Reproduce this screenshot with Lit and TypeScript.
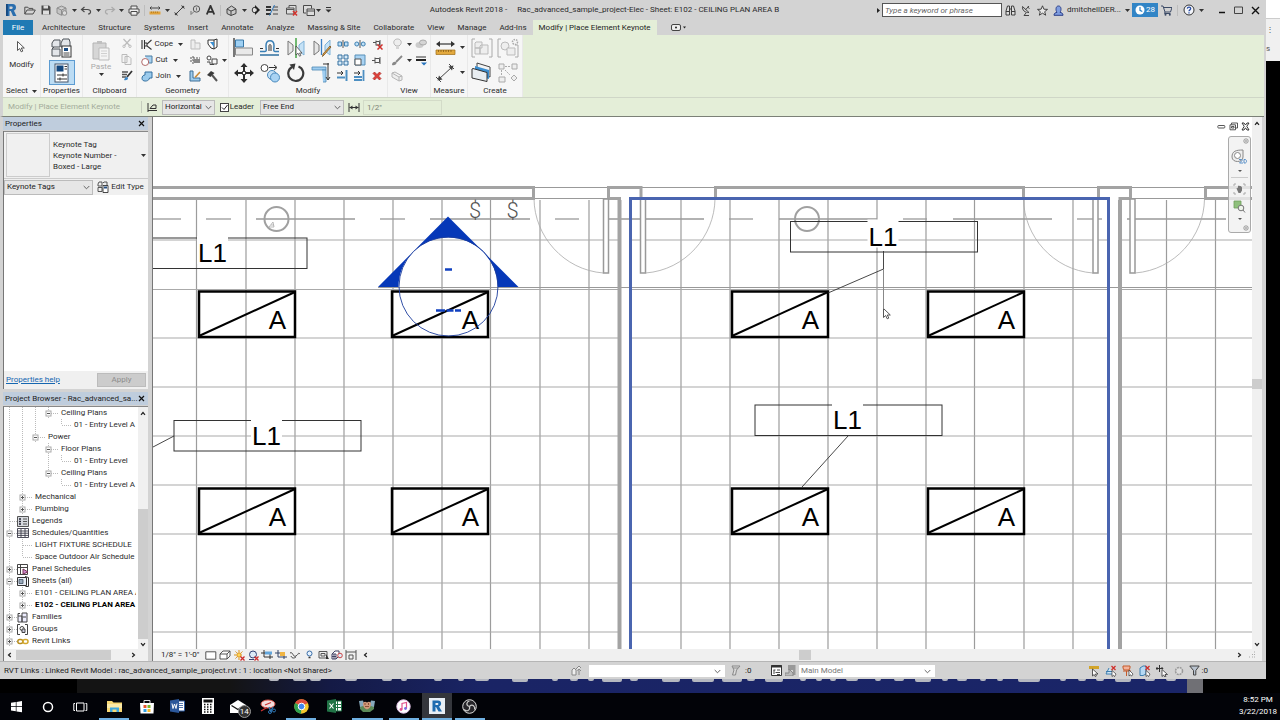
import { LitElement, html, svg, css } from "lit";
import { customElement } from "lit/decorators.js";
import { classMap } from "lit/directives/class-map.js";

type Glyph = [number, number, unknown];

const caret = svg`<path d="M0 0h5L2.500 3z" fill="#333"/>`;
const arrowCursor = svg`<path d="M.5.5v9l2.200-2 1.500 3.300 1.600-.7L4.300 7h3z" fill="#fff" stroke="#444" stroke-width=".9"/>`;

const G: Record<string, Glyph> = {
  caret: [5, 3, caret],
  chev: [7, 5, svg`<path d="M.7 1l2.800 2.800L6.300 1" fill="none" stroke="#555" stroke-width=".9"/>`],
  x: [7, 7, svg`<path d="M1 1l5 5M6 1L1 6" stroke="#111" stroke-width="1.200"/>`],
  up: [6, 5, svg`<path d="M1 3.800L3 1.500l2 2.300" fill="none" stroke="#222" stroke-width="1.200"/>`],
  down: [6, 5, svg`<path d="M1 1.200L3 3.500l2-2.300" fill="none" stroke="#222" stroke-width="1.200"/>`],
  left: [5, 6, svg`<path d="M3.800 1L1.500 3l2.300 2" fill="none" stroke="#222" stroke-width="1.200"/>`],
  right: [5, 6, svg`<path d="M1.200 1l2.300 2-2.300 2" fill="none" stroke="#222" stroke-width="1.200"/>`],
  revit: [12, 14, svg`<path d="M1 1h6.500c2.500 0 3.500 1.500 3.500 3.400 0 1.600-.8 2.800-2.200 3.200L11.500 13H8L5.800 8H4.500v5H1zM4.500 3.500v2.400h2.200c1.400 0 1.400-2.400 0-2.400z" fill="#2a6eae"/><path d="M1 1h1.800v12H1z" fill="#17497f"/>`],
  open: [12, 9, svg`<path d="M.8 8V1.200h3l1 1.200h4V4M.8 8L3 4h8.300L9 8z" fill="none" stroke="#4d4d4d" stroke-width="1"/>`],
  save: [10, 10, svg`<path d="M.5.500h7.500L9.500 2v7.500h-9z" fill="#4a4a4a"/><path d="M2.500.500h4.500v3H2.500zM2 5.500h6v4H2z" fill="#ddd"/>`],
  sync: [12, 11, svg`<path d="M1 3l4.500-2L10 3v5l-4.500 2.300L1 8zM1 3l4.500 2L10 3M5.500 5v5" fill="#c4c4c4" stroke="#8e8e8e"/><circle cx="8.500" cy="8" r="2.300" fill="#ddd" stroke="#8e8e8e"/>`],
  undo: [12, 9, svg`<path d="M4.500 1L1.500 3.500l3 2.500M1.500 3.500h6c4 0 4 4.500.5 4.500" fill="none" stroke="#4a4a4a" stroke-width="1.200"/>`],
  redo: [12, 9, svg`<path d="M7.500 1l3 2.500-3 2.500M10.500 3.500h-6c-4 0-4 4.500-.5 4.500" fill="none" stroke="#aaa" stroke-width="1.200"/>`],
  print: [12, 11, svg`<path d="M3 4V1h6v3M3 8H1V4h10v4H9M3 6.500h6v3.700H3z" fill="#eee" stroke="#4a4a4a"/>`],
  measure: [12, 9, svg`<path d="M1 2h10M2.500.500L1 2l1.500 1.500M9.500.500L11 2 9.500 3.500" fill="none" stroke="#444"/><path d="M.5 5.500h11v3H.5z" fill="#e0a23a"/><path d="M2.500 5.500v1.500m2-1.500v1.500m2-1.500v1.500m2-1.500v1.500" stroke="#a86f12" stroke-width=".6"/>`],
  dim: [11, 11, svg`<path d="M2 9l7-7M.5 7.500l3 3M7.500.5l3 3" stroke="#444" fill="none"/><circle cx="2" cy="9" r="1.300" fill="#444"/><circle cx="9" cy="2" r="1.300" fill="#444"/>`],
  tag: [11, 10, svg`<circle cx="6.500" cy="4" r="3.200" fill="none" stroke="#555"/><path d="M4 6.500L1 9.500V6M6.500 2.500v3" stroke="#777" fill="none"/>`],
  textA: [9, 10, svg`<path d="M.8 9.500L4.500.8l3.700 8.700M2 6.800h5" stroke="#333" stroke-width="1.800" fill="none"/>`],
  home3d: [11, 11, svg`<path d="M1 4l4.500-3L10 4v4.500L5 10.500 1 8.500zM1 4l4 2 5-2M5 6v4.500" fill="#c9c9c9" stroke="#444"/>`],
  section: [9, 10, svg`<circle cx="4" cy="5" r="2.800" fill="#eee" stroke="#333"/><path d="M4 0l5 5-5 5z" fill="#222"/><circle cx="4" cy="5" r="1.800" fill="#ddd"/>`],
  thin: [12, 11, svg`<path d="M0 2h5M0 5h5M0 9h5" stroke="#333" stroke-width="1.800"/><path d="M7 2h5M7 5h5M7 9h5" stroke="#333" stroke-width=".9"/><path d="M8.500 0L3.500 10.500" stroke="#2f7ac0"/>`],
  closeHidden: [12, 11, svg`<path d="M3 3V.5h7V6M.5 3H8v6H.5zM.5 4.500H8" fill="#ddd" stroke="#555"/><path d="M7 6l4 4.500M11 6L7 10.500" stroke="#d3322c" stroke-width="1.500"/>`],
  switchWin: [12, 11, svg`<path d="M.5 3.500V.5h8v3M.5 3v5H3M4 4h7.500v6.500H4zM4 6h7.500" fill="#ddd" stroke="#4a4a4a"/>`],
  custom: [7, 6, svg`<path d="M1 .5h5" stroke="#333"/><path d="M.5 2.500h6L3.500 5.500z" fill="#333"/>`],
  playR: [3, 5, svg`<path d="M0 0l3 2.500L0 5z" fill="#222"/>`],
  binoc: [11, 11, svg`<path d="M1 10V6l1.500-5h2v9zM10 10V6L8.500 1h-2v9zM4.500 4h2M1 6.500h3.500M6.500 6.500H10" fill="#ddd" stroke="#3e3e3e"/>`],
  satellite: [10, 11, svg`<path d="M1.500 1.500C1 5 4 8 8 7.500zM4.500 4.800L8 1M5 8l-2 2.500h5M6.500 2l2 1.500" fill="none" stroke="#444"/>`],
  star: [11, 11, svg`<path d="M5.500.8l1.400 3.400 3.600.2-2.800 2.300 1 3.500-3.200-2-3.200 2 1-3.500L.5 4.400l3.600-.2z" fill="#e8e8e8" stroke="#333" stroke-width=".9"/>`],
  user: [11, 11, svg`<path d="M1 10.300c0-2 1.300-2.600 3-3C2.500 5.500 2.500 1 5.500 1s3 4.500 1.500 6.300c1.700.4 3 1 3 3z" fill="#7f9de0" stroke="#2c3f88"/>`],
  clock: [10, 10, svg`<circle cx="5" cy="5" r="4.500" fill="#fff"/><path d="M5 2v3.300l2.300 1.200" stroke="#2d83c5" fill="none" stroke-width="1.200"/>`],
  cart: [11, 11, svg`<path d="M0 1h2l2 6h5.500L11 2.500H2.800M4 7L3.500 8.500h6" fill="none" stroke="#3c4b66"/><circle cx="4.500" cy="9.800" r="1" fill="#3c4b66"/><circle cx="8.800" cy="9.800" r="1" fill="#3c4b66"/>`],
  help: [12, 12, svg`<circle cx="6" cy="6" r="5" fill="#f3f5fa" stroke="#333"/><path d="M4.300 4.600c.2-2 3.400-1.900 3.400 0C7.700 6 6 5.800 6 7.300M6 8.200v1.300" fill="none" stroke="#2a4fa5" stroke-width="1.300"/>`],
  min: [8, 8, svg`<path d="M1 6.500h6" stroke="#111" stroke-width="1.500"/>`],
  max: [9, 8, svg`<path d="M.5 1h8v6.500h-8z" fill="none" stroke="#444"/>`],
  close: [9, 9, svg`<path d="M1 1l7 7M8 1L1 8" stroke="#111" stroke-width="1.400"/>`],
  tabMore: [15, 7, svg`<rect x=".5" y=".5" width="9" height="6" rx="1.500" fill="#eee" stroke="#444"/><circle cx="5" cy="3.500" r="1" fill="#222"/><path d="M12 2.500h3L13.500 4.500z" fill="#222"/>`],
  cursor: [9, 13, arrowCursor],
  typeProps: [21, 20, svg`<path d="M1 5l2-3h6v7H1zM10 5l2-4h6l1 3v5h-9zM1 11h8v7H1zM1 11l2-2" fill="#e3e6ea" stroke="#4d5258"/><rect x="11" y="8" width="9" height="11" fill="#fff" stroke="#333"/><path d="M13 10h4v3h-4z" fill="#1b4d84"/><path d="M12.500 15h6M12.500 17h6" stroke="#333" stroke-width=".9"/>`],
  props: [16, 20, svg`<rect x="1" y="1" width="13" height="18" fill="#fff" stroke="#44546a"/><path d="M2.500 2.500h7v6h-7z" fill="#12477f"/><path d="M10.500 3.500h2.500M10.500 6h2.500M3 12h10M3 16h10M9 10.500v3M6 14.500v3" stroke="#333"/>`],
  paste: [18, 21, svg`<path d="M1 3h13v16H1z" fill="#d6d6d6" stroke="#b4b4b4"/><path d="M5 1h5v3H5z" fill="#c0c0c0"/><path d="M7 8h10v12H7z" fill="#f4f4f4" stroke="#bbb"/><path d="M9 11h6M9 13.500h6M9 16h6" stroke="#d0d0d0"/>`],
  cut: [10, 10, svg`<path d="M1.500 1l6 6.500M8.500 1l-6 6.500" stroke="#bbb" stroke-width="1.200"/><circle cx="2" cy="8.300" r="1.200" fill="none" stroke="#bbb"/><circle cx="8" cy="8.300" r="1.200" fill="none" stroke="#bbb"/>`],
  copyDim: [11, 11, svg`<path d="M1 .5h5v8H1zM4 2.500h4l2 2v6H4z" fill="#f4f4f4" stroke="#bbb"/>`],
  match: [12, 11, svg`<path d="M1 2h6M1 4.500h5M1 7h4" stroke="#555" stroke-width="1.300"/><path d="M11 1L6 7" stroke="#333" stroke-width="1.800"/><path d="M3 10c1-3 3-4 4-2 0 2-2 2.500-4 2z" fill="#3d86c6"/>`],
  cope: [11, 11, svg`<path d="M1 1v9M3.500 1v9M10.500 1L6 5v2l4.500 3.500M3.500 4H6M3.500 7H6" fill="none" stroke="#333" stroke-width="1.100"/>`],
  cutGeo: [12, 11, svg`<path d="M4 1h7v7H8" fill="#a9d2ef" stroke="#4a7ca3"/><circle cx="4.200" cy="7" r="3.500" fill="#fff" stroke="#b06a6a"/>`],
  join: [12, 11, svg`<path d="M4 1h7v6H8.500c-.5 4-7.500 4-7.500.5C1 5 2.500 4 4 4z" fill="#9bcbed" stroke="#336f9f"/>`],
  jSplit: [11, 11, svg`<path d="M1 1h4v3h5v6H1z" fill="#eee" stroke="#bbb"/><path d="M5 4v6" stroke="#ccc"/>`],
  wallJoin: [12, 11, svg`<path d="M1 3h10M1 6h10M4 1v9" stroke="#555" stroke-dasharray="2 1"/><path d="M5 4h6v4H5z" fill="#888"/>`],
  paintL: [12, 12, svg`<path d="M1 1v10h10V8H4V1z" fill="#9fcdee" stroke="#3e6f96"/><path d="M11 2L6 7.500" stroke="#c98a35" stroke-width="1.600"/>`],
  beam: [11, 12, svg`<path d="M1 2h6l3-1v8l-3 2-3-1-3-4zM7 2v9" fill="#fff" stroke="#333"/><path d="M3 4h4v5z" fill="#3b8ed0"/>`],
  unjoin: [12, 11, svg`<circle cx="3" cy="3" r="2" fill="#fff" stroke="#444"/><path d="M6 4h5v5H6zM1 7h3v2.500h4" fill="none" stroke="#444"/>`],
  hammer: [12, 12, svg`<path d="M1 5l4-4 3.500 2L4.500 7z" fill="#3a3a3a"/><path d="M6 5l5 6" stroke="#555" stroke-width="2"/>`],
  align: [21, 20, svg`<path d="M1 0v19" stroke="#222" stroke-width="1.200"/><path d="M2.500 2h8v7h-8z" fill="#9fd0f3" stroke="#3878a8"/><path d="M2.500 10h17v7h-17z" fill="#e9e9e9" stroke="#888"/>`],
  offset: [21, 18, svg`<path d="M1 16h19" stroke="#2f6f9f" stroke-width="1.500"/><path d="M1 12.500h5c2 0 1-2.500 1-6C7 0 15 0 15 6.500c0 3.500-1 6 1 6h4" fill="none" stroke="#3a7fb5" stroke-width="1.500"/><path d="M1 9.500h3M10 12V7c0-2 2-2 2 0v5M17 9.500h3" fill="none" stroke="#333"/>`],
  mirrorAx: [20, 20, svg`<path d="M2 3l5 4v6l-5 4z" fill="#e6e6e6" stroke="#777"/><path d="M18 3l-5 4v6l5 4z" fill="#c6e2f6" stroke="#7fb2d8"/><path d="M10 0v20" stroke="#3aa03a" stroke-width="1.400"/><path d="M10 8v9l2-1.800 1.500 3 1.400-.7L13.500 15H16z" fill="#fff" stroke="#444" stroke-width=".8"/>`],
  mirrorDr: [20, 20, svg`<path d="M2 3l5 4v6l-5 4z" fill="#e6e6e6" stroke="#777"/><path d="M18 2l-5 5v6l5 4z" fill="#c6e2f6" stroke="#7fb2d8"/><path d="M9.500 1v16" stroke="#3a7fc5" stroke-width="1.300"/><path d="M19 9l-7 8-1.500 1.500L11 16l7-8z" fill="#e7a544" stroke="#74501f" stroke-width=".8"/>`],
  move: [20, 20, svg`<path d="M10 0l3.500 4h-7zM10 20l3.500-4h-7zM0 10l4-3.500v7zM20 10l-4-3.500v7z" fill="#2d2d2d"/><path d="M10 3v5M10 12v5M3 10h5M12 10h5" stroke="#2d2d2d" stroke-width="2"/><path d="M8.500 8.500h3v3h-3z" fill="#fff" stroke="#333"/>`],
  copy: [20, 20, svg`<circle cx="4.500" cy="5" r="3.500" fill="#fff" stroke="#444"/><path d="M9 4.500h7M14 2l3 2.500L14 7" fill="none" stroke="#333"/><circle cx="12" cy="12" r="4.500" fill="#c5e1f6" stroke="#4a8abd"/><circle cx="15" cy="14.500" r="4.500" fill="#a9d3f3" stroke="#4a8abd"/>`],
  rotate: [19, 20, svg`<path d="M6 4A7.500 7.500 0 1 0 12.500 3.500" fill="none" stroke="#3a3a3a" stroke-width="2.200"/><path d="M3.500 1.500l6-1-1.500 6.500z" fill="#3a3a3a"/>`],
  trim: [21, 20, svg`<path d="M1 4h14v3H1z" fill="#9fcdf0" stroke="#4d88b5" stroke-width=".8"/><path d="M11 7h4v12h-3" fill="#9fcdf0" stroke="#4d88b5" stroke-width=".8"/><path d="M12 1h6M17 0v17M15 14l2 3 2-3" fill="none" stroke="#333"/>`],
  split1: [12, 8, svg`<path d="M1 2h3.500v4H1zM7.500 2H11v4H7.500z" fill="#bfe0f7" stroke="#3d7fb0"/><path d="M6 0v8" stroke="#555"/>`],
  split2: [12, 8, svg`<circle cx="2.800" cy="4" r="2" fill="#bfe0f7" stroke="#3d7fb0"/><circle cx="9.200" cy="4" r="2" fill="#bfe0f7" stroke="#3d7fb0"/><path d="M6 0v8" stroke="#555"/>`],
  unpin: [11, 11, svg`<path d="M1 3.500h3M4 1.500v5M4 2.500h3.500v3.500H4M8 1v6" stroke="#555" fill="none"/><path d="M5.500 5.500l5 5M10.500 5.500l-5 5" stroke="#cf2f2b" stroke-width="1.500"/>`],
  array: [12, 12, svg`<path d="M1 1h4v4H1zM7 1h4v4H7zM1 7h4v4H1zM7 7h4v4H7z" fill="#d7ebf9" stroke="#336f9f"/>`],
  scale: [12, 12, svg`<path d="M1 1h10v10H1z" fill="#a9d3f3" stroke="#5890b8"/><path d="M1 5h6v6H1z" fill="#fff" stroke="#555"/>`],
  pin: [10, 9, svg`<path d="M0 4.500h3M3 1.500v6M3 2.500h4.500v4H3M8 1v7" stroke="#555" fill="none"/>`],
  trimS: [12, 12, svg`<path d="M0 3h6M4 1l2 2-2 2" fill="none" stroke="#333"/><path d="M0 7.500h8M9.500 0v11" stroke="#4d8fc2" stroke-width="2"/>`],
  trimM: [12, 12, svg`<path d="M0 3h6M4 1l2 2-2 2" fill="none" stroke="#333"/><path d="M0 7h8M0 10h8M9.500 0v11" stroke="#4d8fc2" stroke-width="1.800"/>`],
  del: [10, 10, svg`<path d="M1 2.500L2.500 1 5 3.500 7.500 1 9 2.500 6.500 5 9 7.500 7.500 9 5 6.500 2.500 9 1 7.500 3.500 5z" fill="#e0403a" stroke="#a82520" stroke-width=".7"/>`],
  bulb: [9, 12, svg`<path d="M3 8C-1 5 1 1 4.500 1S10 5 6 8zM3 10h3" fill="#eee" stroke="#b5b5b5"/>`],
  clay: [12, 10, svg`<ellipse cx="4.500" cy="6" rx="4" ry="3" fill="#ccc"/><ellipse cx="8" cy="3.500" rx="3.500" ry="2.500" fill="#d5d5d5" stroke="#aaa"/>`],
  brush: [12, 11, svg`<path d="M11 1L5 7" stroke="#888" stroke-width="1.800"/><path d="M1 10c0-3 3-4 4.500-2.500C5.500 10 3 10.500 1 10z" fill="#888"/>`],
  lwork: [12, 11, svg`<path d="M1 2h10" stroke="#333"/><path d="M1 5h10" stroke="#222" stroke-width="2"/><path d="M6 7.500h6L9 10.500z" fill="#2774bd"/>`],
  box3: [12, 11, svg`<path d="M1 2l3-1 7 4v4l-3 1-7-4zM1 2l7 4 3-1M8 6v4" fill="#eee" stroke="#b5b5b5"/>`],
  measBig: [21, 18, svg`<path d="M2 5h17" stroke="#333" stroke-width="1.200"/><path d="M5 2L1 5l4 3zM16 2l4 3-4 3z" fill="#333"/><path d="M1 11h19v4.500H1z" fill="#e3a93d" stroke="#9f6d17" stroke-width=".7"/><path d="M3.500 11v2m2.500-2v2m2.500-2v2m2.500-2v2m2.500-2v2m2.500-2v2" stroke="#7a5210" stroke-width=".7"/>`],
  dimBig: [21, 20, svg`<path d="M4 16L17 4M1 14l5 5M14 1l5 5" stroke="#444"/><path d="M2.500 17.500l5-1-3.500-4zM18.500 2.500l-5 1 3.500 4z" fill="#444"/>`],
  grp: [22, 20, svg`<path d="M4 1H1v18h3M18 1h3v18h-3" fill="none" stroke="#aaa"/><path d="M4 5l1-1h6v6H4zM9 8l1-1h7v9H9zM4 10h5v6H4z" fill="#eee" stroke="#bbb"/>`],
  asm: [22, 20, svg`<path d="M4 1H1v18h3M18 7h3v12h-3" fill="none" stroke="#aaa"/><circle cx="8" cy="8" r="4" fill="#eee" stroke="#bbb"/><path d="M10 10h8v7h-8z" fill="#eee" stroke="#bbb"/><circle cx="18" cy="4" r="2.500" fill="none" stroke="#aaa" stroke-width="1.500" stroke-dasharray="1.500 1"/>`],
  parts: [22, 21, svg`<path d="M6 1l13 4v10L6 11z" fill="#f4f4f4" stroke="#444"/><path d="M4 4l14 4v9L4 13z" fill="#3b8ed0"/><path d="M1 7l1-.5 14 4v9L1 16z" fill="#e8edf1" stroke="#333"/>`],
  sim: [20, 20, svg`<path d="M1 1h5v5H1zM14 1h5v5h-5zM1 14h6v5H1zM16 12l3 3-3 3-3-3z" fill="#eee" stroke="#aaa"/><path d="M7 3.500h5M3.500 7v5M7 7l5 5" stroke="#aaa" stroke-dasharray="2 1"/>`],
  leaderOpt: [10, 9, svg`<path d="M1 0v9M1 7.500h9M3 5.500l3-3.500h3v3.500z" fill="none" stroke="#333"/>`],
  hdim: [12, 9, svg`<path d="M1 0v9M11 0v9M1.500 4.500h9" stroke="#333"/><path d="M1.500 4.500l3-2v4zM10.500 4.500l-3-2v4z" fill="#333"/>`],
  editType: [12, 12, svg`<path d="M1 3l1-2h3v4H1zM6 2l1-1h3v4M1 6.500h4v4H1z" fill="#f0f0f0" stroke="#444" stroke-width=".9"/><path d="M6 4.500h5v7H6z" fill="#fff" stroke="#333" stroke-width=".9"/><path d="M7 5.500h3v2H7z" fill="#274f82"/>`],
  legends: [12, 11, svg`<path d="M.5.500h11v10H.5z" fill="#d7dadf" stroke="#555"/><path d="M2 3h2M2 5.500h2M2 8h2" stroke="#223" stroke-width="1.400"/><path d="M6 3h4M6 5.500h4M6 8h4" stroke="#555"/>`],
  sched: [12, 10, svg`<path d="M.5.500h11v9H.5zM.5 3h11M.5 5.200h11M.5 7.400h11M4 1v8M8 1v8" fill="#fff" stroke="#3a3a48" stroke-width=".9"/>`],
  panel: [12, 11, svg`<path d="M.5.500h10v10H.5zM3.500.500v10M.5 3.500h10" fill="#fff" stroke="#444"/><path d="M6 5l5 3-5 2z" fill="#d08ad0" stroke="#735"/>`],
  sheets: [12, 11, svg`<path d="M.5 1.500h9v8h-9z" fill="#e6ecf5" stroke="#333"/><path d="M2 3.500h4v4H2z" fill="#9ab" stroke="#345" stroke-width=".7"/><path d="M8 .5l3.500 1v9h-3" fill="none" stroke="#333"/>`],
  fam: [12, 11, svg`<path d="M1 4h4v6H1zM5 1h5v9H5zM1 4V1.500h2" fill="#eef" stroke="#444"/><path d="M6 5h3" stroke="#444"/>`],
  groups: [12, 11, svg`<path d="M3 .5H.5v10H3M8 .5h2.500v10H8" fill="none" stroke="#444"/><circle cx="5" cy="4.500" r="2" fill="none" stroke="#444"/><path d="M5 5h3v3.500H5z" fill="#ccd" stroke="#444"/>`],
  links: [12, 7, svg`<rect x=".8" y="1.500" width="5" height="4" rx="2" fill="none" stroke="#b88d1c" stroke-width="1.500"/><rect x="6" y="1.500" width="5" height="4" rx="2" fill="none" stroke="#d2a72e" stroke-width="1.500"/>`],
  vRect: [12, 9, svg`<path d="M.8.800h10v7.400H.8z" fill="#fff" stroke="#555"/>`],
  vCube: [12, 10, svg`<path d="M1 4l3-3h7v5L8 9H1zM1 4h7v5M8 4l3-3" fill="#fff" stroke="#444" stroke-width=".9"/>`],
  vSun: [11, 11, svg`<circle cx="5" cy="5" r="2.200" fill="#ffd65a" stroke="#d99018"/><path d="M5 0v2M5 8v2M0 5h2M1.500 1.500l1.300 1.300M8.500 1.500L7.200 2.800M1.500 8.500l1.300-1.300" stroke="#d99018"/><path d="M6.500 6.500l4 4M10.500 6.500l-4 4" stroke="#cc2b2b" stroke-width="1.300"/>`],
  vShade: [11, 11, svg`<circle cx="5" cy="4.500" r="3.500" fill="#dceaf7" stroke="#347"/><path d="M1 9.500h5" stroke="#347"/><path d="M6.500 6.500l4 4M10.500 6.500l-4 4" stroke="#cc2b2b" stroke-width="1.300"/>`],
  vCrop: [12, 10, svg`<path d="M0 3h9V9M3 0v7h9" fill="none" stroke="#333"/><path d="M4 1.500h7v3H4z" fill="#62a6dc"/>`],
  vCrop2: [12, 10, svg`<path d="M0 3h9V9M3 0v7h9" fill="none" stroke="#346"/><path d="M5 2h5v4H5z" fill="#f0b443"/>`],
  vLock: [12, 10, svg`<path d="M1 3c3-2 3 5 6 3s2-4 4-2M2 6c1 3 4 2 5 1" fill="none" stroke="#444"/>`],
  vBulb: [7, 10, svg`<circle cx="3.500" cy="3.500" r="2.500" fill="#e6f2ff" stroke="#3a6ea8"/><path d="M2.500 7.500h2" stroke="#333" stroke-width="1.500"/>`],
  vHide: [11, 10, svg`<path d="M1 1.500h8v6.500H1zM3 3.500h4v2.500H3z" fill="none" stroke="#555"/><path d="M8 4l3 5H8z" fill="#333"/>`],
  vWork: [12, 10, svg`<path d="M1 4l3-3h4v5L5 9H1zM1 4h4v5M1 6.500h4M3 4v5" fill="#fff" stroke="#446"/><circle cx="9" cy="5.500" r="2.300" fill="#dceaf7" stroke="#c44"/>`],
  vCons: [12, 10, svg`<path d="M1 0v10M11 0v10M1 2h10M4 5h4v4H4z" fill="none" stroke="#555"/>`],
  sWork: [12, 11, svg`<path d="M1 10V5l2-2 2 2v5zM5 4l3-3 2 2M8 4v6M6.500 6L8 4l2 2" fill="#eee" stroke="#888"/>`],
  sEdit: [10, 11, svg`<path d="M1 1h8L6 4.500 5 10H2l1.500-4zM3 3h4" fill="#ccc" stroke="#888"/>`],
  sOpt: [11, 11, svg`<path d="M.5.500h10v10H.5z" fill="#fff" stroke="#333"/><path d="M0 1.500h11" stroke="#333" stroke-width="2"/><path d="M2.500 5h2M6 5h3M3 5v4M4.500 7.500H9M6 9.500h3" stroke="#333" stroke-width=".9"/>`],
  sAdd: [11, 11, svg`<path d="M3 0h7.500v10H8V5H3z" fill="#999"/><path d="M0 8h4V4l4 4v3H0z" fill="#bbb" stroke="#888"/>`],
  selLink: [12, 12, svg`<path d="M1 2.500h4M7 2.500h4M4 2.500h4" stroke="#d2a42a" stroke-width="3"/><path d="M4.500 4v7l1.700-1.500 1 2 1.200-.5-1-2H10z" fill="#fff" stroke="#333" stroke-width=".8"/>`],
  selUnder: [12, 12, svg`<path d="M4 3L1 9h8M1 6.500h6" fill="#cde4f5" stroke="#3d7fb0"/><path d="M6.500 1l4 4M10.500 1l-4 4" stroke="#cf2f2b" stroke-width="1.300"/><path d="M7 5.500v6l1.500-1.300 1 1.500L11 9z" fill="#fff" stroke="#333" stroke-width=".7"/>`],
  selPin: [12, 12, svg`<path d="M1 1h7v2L7 5H2L1 3zM1 6h8M4.500 6v5" fill="#f3b29a" stroke="#c55a2a"/><path d="M7 5v6l1.500-1.300 1 1.500L11 9z" fill="#fff" stroke="#333" stroke-width=".7"/>`],
  selFace: [12, 12, svg`<path d="M1 3l3-2h3v8l-3 1.500H1z" fill="#b5d9f3" stroke="#3d7fb0"/><path d="M6.500 1l4 4M10.500 1l-4 4" stroke="#cf2f2b" stroke-width="1.300"/><path d="M7 5.500v6l1.500-1.300 1 1.500L11 9z" fill="#fff" stroke="#333" stroke-width=".7"/>`],
  selDrag: [12, 12, svg`<path d="M3.500 0v7M0 3.500h7M1.500 2L0 3.500 1.500 5M5.500 2L7 3.500" stroke="#333" fill="none"/><path d="M6 4.500v7l1.700-1.500 1 2L10 11.500l-1-2h2.500z" fill="#fff" stroke="#333" stroke-width=".8"/>`],
  gearDim: [10, 10, svg`<circle cx="5" cy="5" r="3.500" fill="#ddd" stroke="#999" stroke-width="1.500" stroke-dasharray="2 .8"/>`],
  funnel: [11, 11, svg`<path d="M.8 1h9.400L6.800 5.500V10H4.500V5.500z" fill="#b9c3cf" stroke="#444"/>`],
  funnelDim: [11, 11, svg`<path d="M2 1h8L6.500 5 5.500 10H2.500l1.500-5zM3 3h5" fill="#ddd" stroke="#888"/>`],
  grip: [8, 8, svg`<path d="M6 1h1M4 3.500h1M6 3.500h1M1 6h1M4 6h1M6 6h1" stroke="#aaa" stroke-width="1.200"/>`],
  mdiMin: [9, 7, svg`<rect x=".8" y="2.500" width="7" height="2.500" rx=".8" fill="#fff" stroke="#444" stroke-width=".9"/>`],
  mdiMax: [9, 9, svg`<path d="M2.500 2.500V1h6v5H7M1 2.800h5.500v5H1zM2.500 4.500h2.500v1.500H2.500z" fill="#fff" stroke="#444" stroke-width=".9"/>`],
  mdiX: [9, 9, svg`<path d="M1 1h2l1.500 2L6 1h2L5.800 4.300 8 8H6L4.500 5.800 3 8H1l2.200-3.700z" fill="#fff" stroke="#222" stroke-width=".9"/>`],
  nDot: [6, 6, svg`<circle cx="3" cy="3" r="2.200" fill="#eee" stroke="#888" stroke-width=".8"/><path d="M2 2l2 2M4 2L2 4" stroke="#999" stroke-width=".6"/>`],
  nWheel: [17, 16, svg`<path d="M1 8C1 2 5 1 12 1v7c0 6-11 6-11 0z" fill="#eee" stroke="#888"/><circle cx="6.500" cy="6.500" r="3" fill="#fff" stroke="#888"/><path d="M8 10.500h2.500c1 0 1 1.300 0 1.500L8.500 14H12M13 10.500v3.500h1c2 0 2-3.500 0-3.500z" fill="none" stroke="#5a90c8"/>`],
  nPan: [13, 12, svg`<path d="M1 3V1h2M10 1h2v2M1 9v2h2M10 11h2V9" fill="none" stroke="#aaa"/><path d="M3.500 5.500l1-1 .5 1V3l1-.5.5.500L7.500 3l.8.5.7 1v3L7.500 10H5.500z" fill="#777"/>`],
  nZoom: [13, 13, svg`<path d="M1 1h7v7H1z" fill="#8fc07c" stroke="#6ea05c" stroke-width=".8"/><circle cx="8" cy="8" r="2.800" fill="#eef4ea" stroke="#777"/><path d="M10 10l2 2.500" stroke="#777"/>`],
  navCaret: [4, 2, svg`<path d="M0 0h4L2 2z" fill="#555"/>`],
  tWin: [13, 13, svg`<path d="M1 2.800l4.800-.7v4.200H1zM6.500 2L12 1v5.300H6.500zM1 7h4.800v4.200L1 10.500zM6.500 7H12v5.200l-5.500-.8z" fill="#fff"/>`],
  tRing: [12, 12, svg`<circle cx="6" cy="6" r="4.500" fill="none" stroke="#fff" stroke-width="1.500"/>`],
  tTask: [15, 10, svg`<path d="M3.500 1h7.500v8H3.500zM2 1.500H.8v7H2M12.500 1.500h1.300v7h-1.300" fill="none" stroke="#fff"/>`],
  tFolder: [15, 13, svg`<path d="M0 1h5l1.500 1.500H15V12H0z" fill="#f7d774"/><path d="M0 4h15v4H0z" fill="#fbe9a8"/><path d="M3 12V7.500h9V12H9.500V9.500h-4V12z" fill="#3fa7dd"/>`],
  tStore: [16, 15, svg`<path d="M5 4V1.500h6V4" fill="none" stroke="#ddd"/><path d="M1 4h14l-.5 10.500h-13z" fill="#fff"/><path d="M4.500 6h3v3h-3z" fill="#e8542e"/><path d="M8.500 6h3v3h-3z" fill="#7db52b"/><path d="M4.500 10h3v3h-3z" fill="#2f9fe0"/><path d="M8.500 10h3v3h-3z" fill="#f5b82a"/>`],
  tWord: [15, 14, svg`<path d="M7 2h7.500v10H7z" fill="#fff" stroke="#2b579a"/><path d="M9 4.500h4M9 6.500h4M9 8.500h4" stroke="#2b579a" stroke-width=".8"/><path d="M0 1.500L9 0v14l-9-1.500z" fill="#2b579a"/><path d="M2 4.500l1 5 1.500-4.500L6 9.500l1-5" fill="none" stroke="#fff"/>`],
  tCalc: [12, 16, svg`<path d="M0 0h12v16H0z" fill="#fff"/><path d="M1.500 1.500h9v3h-9z" fill="#111"/><path d="M2 6.500h8M2 9h8M2 11.500h8M2 14h8" stroke="#111" stroke-width="1.300" stroke-dasharray="1.500 1.500"/>`],
  tMail: [16, 13, svg`<path d="M0 5l8-5 8 5v8H0z" fill="#fff"/><path d="M1.500 5.500L8 9.500l6.500-4" fill="none" stroke="#111" stroke-width="1.300"/>`],
  tSnip: [16, 15, svg`<ellipse cx="8" cy="5" rx="7" ry="4" fill="#f3dede" stroke="#d9534a"/><path d="M5 6l6-2.500M1 12l6-3.500" stroke="#c33" stroke-width="1.300"/><path d="M9 8l2 5M13 8l-2 4" stroke="#2f77b5" stroke-width="1.300"/><circle cx="10" cy="13" r="1.500" fill="none" stroke="#2f77b5"/><circle cx="14" cy="11.500" r="1.500" fill="none" stroke="#2f77b5"/>`],
  tChrome: [15, 15, svg`<circle cx="7.500" cy="7.500" r="7.200" fill="#f5c72c"/><path d="M7.500 7.500L1.200 4a7.200 7.200 0 0 1 12.600 0z" fill="#dd4b3e"/><path d="M7.500 7.500L1.200 4a7.200 7.200 0 0 0 5.800 10.700z" fill="#2fa14f"/><circle cx="7.500" cy="7.500" r="3.300" fill="#4386ee" stroke="#fff"/>`],
  tExcel: [15, 14, svg`<path d="M7 2h7.500v10H7z" fill="#fff" stroke="#217346"/><path d="M10.500 2v10M7 5.500h7.500M7 8.500h7.500" stroke="#217346"/><path d="M0 1.500L9 0v14l-9-1.500z" fill="#217346"/><path d="M2.500 4.500l4 5M6.500 4.500l-4 5" stroke="#fff" stroke-width="1.200"/>`],
  tFolks: [16, 13, svg`<path d="M1 6h14v3l-4 3H4L1 9z" fill="#5c8a58"/><path d="M0 1l4-.5 1.500 5L1 7zM16 1l-4-.5-1.500 5L15 7z" fill="#87a9bd"/><path d="M4 4c0-2 2-3 4-1.500C10 1 12 2 12 4c0 3-2 5-4 5.500C6 9 4 7 4 4z" fill="#d0997a"/><path d="M6 6.500h4M6 3v2M9.500 3v2" stroke="#8c4e37"/>`],
  tMusic: [15, 15, svg`<circle cx="7.500" cy="7.500" r="6.700" fill="#fff" stroke="#e5c4ea"/><path d="M6 10.500V4.500l4.500-1v6" fill="none" stroke="#e0508c" stroke-width="1.200"/><circle cx="5" cy="10.500" r="1.400" fill="#e0508c"/><circle cx="9.500" cy="9.500" r="1.400" fill="#7a6ae0"/>`],
  tRevit: [16, 16, svg`<path d="M0 0h16v16H0z" fill="#e8eef5"/><path d="M3.500 2.500h5.500c4 0 4 5.300 1 6l3 5H9.500L7 9H6.500v4.500h-3zM6.500 5v2h2c1.200 0 1.200-2 0-2z" fill="#1f6cb0"/>`],
  tObs: [15, 15, svg`<circle cx="7.500" cy="7.500" r="6.800" fill="#26252a" stroke="#ddd"/><path d="M7.500 7.500c-4-1-3-5 0-5.500M7.500 7.500c3-3 6 0 5 3M7.500 7.500c1 4-3 5.500-5.500 3" fill="none" stroke="#ccc" stroke-width="1.200"/>`],
};

const ic = (name: string) => {
  const [w, h, body] = G[name];
  return html`<svg class="ic" width=${w} height=${h} viewBox="0 0 ${w} ${h}" aria-hidden="true">${body}</svg>`;
};
const btn = (name: string, label: string, cls = "") =>
  html`<button class="ib ${cls}" aria-label=${label}>${ic(name)}</button>`;

const QUICK: [string, string, string][] = [
  ["revit", "Application menu", "w22"], ["open", "Open", "w16"], ["save", "Save", "w16"], ["sync", "Synchronize", "w15"], ["caret", "Sync options", "w10"],
  ["undo", "Undo", "w14"], ["caret", "Undo list", "w10"], ["redo", "Redo", "w13"], ["caret", "Redo list", "w10"], ["print", "Print", "w16"],
  ["|", "", ""], ["measure", "Measure", "w15"], ["caret", "Measure options", "w10"], ["dim", "Aligned dimension", "w15"], ["tag", "Tag", "w16"], ["textA", "Text", "w15"],
  ["|", "", ""], ["home3d", "Default 3D view", "w16"], ["caret", "3D options", "w10"], ["section", "Section", "w13"], ["thin", "Thin lines", "w20"],
  ["closeHidden", "Close hidden windows", "w20"], ["switchWin", "Switch windows", "w14"], ["caret", "Window list", "w5"], ["custom", "Customize toolbar", "w14"],
];

const TABS = ["Architecture", "Structure", "Systems", "Insert", "Annotate", "Analyze", "Massing & Site", "Collaborate", "View", "Manage", "Add-Ins"];

interface Row { g: string; t: string; icon?: string; bold?: boolean }
const TREE: Row[] = [
  { g: "|||-", t: "Ceiling Plans" }, { g: "||| L", t: "01 - Entry Level A" },
  { g: "||-", t: "Power" }, { g: "|| -", t: "Floor Plans" }, { g: "|| |L", t: "01 - Entry Level" },
  { g: "|| -", t: "Ceiling Plans" }, { g: "||  L", t: "01 - Entry Level A" },
  { g: "|+", t: "Mechanical" }, { g: "|+", t: "Plumbing" },
  { g: "T", t: "Legends", icon: "legends" }, { g: "-", t: "Schedules/Quantities", icon: "sched" },
  { g: "|T", t: "LIGHT FIXTURE SCHEDULE" }, { g: "|L", t: "Space Outdoor Air Schedule" },
  { g: "+", t: "Panel Schedules", icon: "panel" }, { g: "-", t: "Sheets (all)", icon: "sheets" },
  { g: "|+", t: "E101 - CEILING PLAN AREA A" }, { g: "|+", t: "E102 - CEILING PLAN AREA", bold: true },
  { g: "+", t: "Families", icon: "fam" }, { g: "+", t: "Groups", icon: "groups" }, { g: "+", t: "Revit Links", icon: "links" },
];

const TASKS: [string, string, string][] = [
  ["tFolder", "File Explorer", "run"], ["tStore", "Store", ""], ["tWord", "Word", ""], ["tCalc", "Calculator", ""], ["tMail", "Mail", ""], ["tSnip", "Snipping Tool", ""],
  ["tChrome", "Chrome", "run"], ["tExcel", "Excel", ""], ["tFolks", "Family", "run"], ["tMusic", "iTunes", "run"], ["tRevit", "Revit", "run on"], ["tObs", "OBS", "run"],
];

const V_LINES = [196.5, 246, 295, 344, 393, 442, 490.5, 540, 589, 681, 730, 779, 828, 877, 926, 974.5, 1024, 1073, 1166.5, 1215.5];
const H_LINES = [240, 289.5, 338, 387, 436, 485, 534, 583, 632];
const DASHES = [[153, 181], [206, 231], [256, 355], [380, 405], [430, 530], [555, 579], [605, 704], [729, 753], [779, 877], [903, 927], [953, 1052], [1077, 1102], [1127, 1226]];
const FIXTURES = [[199, 291], [392, 291], [732, 291], [928, 291], [199, 488], [392, 488], [732, 488], [928, 488]];
const LABELS = [[120, 238], [174, 420.5], [790.5, 221.5], [755, 405]];
const MARKS = [[269, 10], [293, 14], [310, 11], [345, 12], [382, 10], [401, 6], [434, 8], [458, 6], [475, 14], [512, 16], [552, 6], [570, 8], [588, 6], [602, 20], [630, 8], [662, 18], [692, 22], [722, 20], [747, 8], [765, 18], [800, 6], [816, 6], [830, 6], [846, 12], [875, 6], [894, 10], [915, 16], [942, 6], [957, 10], [980, 6], [997, 6], [1018, 22], [1060, 6], [1078, 8], [1096, 8], [1115, 16], [1145, 10], [1166, 10]];

@customElement("app-root")
export class AppRoot extends LitElement {
  static styles = css`
    :host { display: flex; flex-direction: column; height: 100vh; overflow: hidden; background: #000; color: #2b2b2b; font: 8px/12px Roboto, "Noto Sans", sans-serif; }
    * { box-sizing: border-box; }
    button, input, select { font: inherit; color: inherit; margin: 0; padding: 0; border: 0; background: none; border-radius: 0; }
    button { display: flex; align-items: center; justify-content: center; white-space: nowrap; }
    .ic { display: block; flex: none; }
    .desk { flex: 1; min-height: 0; display: flex; }
    .behind { width: 14px; flex: none; display: flex; flex-direction: column; }
    .b1 { height: 19px; background: #fff; border-bottom: 1px solid #ccc; }
    .b2 { height: 42px; background: #f0f0f0; color: #555; padding-top: 5px; display: flex; flex-direction: column; gap: 7px; }
    .win { flex: 1; min-width: 0; display: flex; flex-direction: column; background: #d3d3d3; }
    .title { height: 20px; display: flex; align-items: center; flex: none; }
    .title .ib { height: 20px; flex: none; }
    .w5 { width: 5px; } .w8 { width: 8px; } .w10 { width: 10px; } .w13 { width: 13px; } .w14 { width: 14px; } .w15 { width: 15px; } .w16 { width: 16px; } .w17 { width: 17px; } .w20 { width: 20px; } .w22 { width: 22px; }
    .vs { width: 1px; height: 11px; background: #bdbdbd; margin: 0 2px; flex: none; }
    .caption { flex: 1; display: flex; justify-content: center; gap: 10px; white-space: nowrap; }
    .search { width: 120px; height: 14px; border: 1px solid #555; background: #fff; padding: 0 2px; flex: none; }
    .search::placeholder { color: #666; font-style: italic; opacity: 1; }
    .acct { width: 56px; text-align: center; flex: none; }
    .trial { width: 26px; height: 14px; background: #3285c6; color: #fff; gap: 1px; flex: none; }
    .sys { display: flex; padding: 0 2px 0 8px; }
    .tabs { height: 15px; flex: none; display: flex; padding-left: 3px; align-items: stretch; }
    .file { width: 30px; background: #1f7ab4; color: #fff; margin-right: 2px; }
    .tab { padding: 0 6px 0 7px; }
    .active { background: #e4eed8; color: #222; padding: 0 6px; }
    .more { padding-left: 14px; }
    .ribbon { height: 63px; flex: none; display: flex; background: #e4eed8; border-bottom: 1px solid #cfd6c7; border-right: 2px solid #d3d3d3; border-left: 3px solid #d3d3d3; }
    .panel { display: flex; flex-direction: column; background: #f6f6f6; border-right: 1px solid #e9e9e9; flex: none; }
    .pb { height: 50px; display: flex; justify-content: center; }
    .pl { height: 12px; display: flex; gap: 4px; align-items: center; justify-content: center; }
    .p1 { width: 38px; } .p2 { width: 42px; } .p3 { width: 54px; } .p4 { width: 92px; } .p5 { width: 159px; } .p6 { width: 43px; } .p7 { width: 37px; } .p8 { width: 55px; }
    .col { display: flex; flex-direction: column; align-items: center; }
    .big { height: 25px; width: 26px; }
    .arr { height: 25px; width: 8px; }
    .sm { height: 16px; width: 17px; }
    .dim { color: #aaa; }
    .sel-on { background: #bcdcf4; border: 1px solid #5c9bd1; }
    .modify { flex-direction: column; gap: 5px; height: 42px; width: 38px; }
    .pastebtn { flex-direction: column; height: 46px; width: 34px; }
    .g4 { display: grid; grid-template-columns: repeat(4, 26px); }
    .g3 { display: grid; grid-template-columns: repeat(3, 17px); grid-auto-rows: 16px; padding-top: 1px; }
    .geo { display: grid; grid-template-columns: 50px 17px 17px 8px; grid-auto-rows: 16px; padding-top: 1px; width: 92px; }
    .gt { gap: 3px; justify-content: flex-start; padding-left: 4px; }
    .gt .ic:last-child { margin-left: 2px; }
    .gv { display: grid; grid-template-columns: 16px 8px 16px; grid-auto-rows: 16px; padding-top: 1px; }
    .opts { height: 19px; flex: none; display: flex; align-items: center; background: #e4eed8; border-bottom: 1px solid #7b8077; border-left: 3px solid #d3d3d3; margin-right: 2px; }
    .mode { width: 139px; padding-left: 5px; color: #a3ab9b; border-right: 1px solid #c5ccbd; white-space: nowrap; }
    .dd { position: relative; display: flex; background: #e6e6e6; border: 1px solid #bbb; height: 15px; }
    .dd select { appearance: none; flex: 1; width: 100%; padding: 0 2px; color: #222; }
    .dd .ic { position: absolute; right: 2px; top: 4px; pointer-events: none; }
    .d1 { width: 53px; margin: 0 5px 0 0; } .d2 { width: 84px; margin: 0 4px 0 6px; }
    .chk { display: flex; align-items: center; gap: 1px; width: 34px; }
    .chk input { appearance: none; width: 9px; height: 9px; border: 1px solid #444; background: #fff url('data:image/svg+xml,<svg xmlns="http://www.w3.org/2000/svg" viewBox="0 0 7 7"><path d="M1 3.500l2 2L6.500 1" fill="none" stroke="%23222"/></svg>'); }
    .lo { width: 20px; display: flex; justify-content: center; }
    .off { width: 79px; height: 15px; border: 1px solid #d3dbc8; padding: 0 3px; color: #7c8376; margin-left: 3px; }
    .body { flex: 1; min-height: 0; display: flex; }
    .dock { width: 152px; padding: 0 4px 0 3px; display: flex; flex-direction: column; flex: none; }
    .hd { height: 13px; flex: none; background: #bfcddd; display: flex; align-items: center; justify-content: space-between; padding: 0 3px 0 2px; color: #222; margin-bottom: 1px; white-space: nowrap; }
    .props { height: 258px; display: flex; flex-direction: column; background: #f0f0f0; border-left: 1px solid #777; flex: none; margin-bottom: 3px; }
    .type { height: 48px; display: flex; align-items: center; border-top: 1px solid #888; border-bottom: 1px solid #ccc; padding: 0 2px; gap: 3px; }
    .thumb { width: 44px; height: 44px; border: 1px solid #ccc; flex: none; }
    .tname { flex: 1; line-height: 11px; }
    .filter { height: 16px; display: flex; align-items: center; }
    .d3 { width: 89px; }
    .et { flex: 1; gap: 2px; }
    .blank { flex: 1; background: #fff; }
    .foot { height: 18px; display: flex; align-items: center; justify-content: space-between; padding: 0 2px; }
    a { color: #1566b0; }
    .apply { width: 49px; height: 14px; background: #ccc; border: 1px solid #bcbcbc; color: #8d8d8d; }
    .browser { flex: 1; min-height: 0; display: flex; flex-direction: column; background: #fff; border-left: 1px solid #777; border-top: 1px solid #888; }
    .tw { flex: 1; min-height: 0; display: flex; }
    .tree { flex: 1; min-width: 0; overflow: hidden; padding: 0 2px; list-style: none; margin: 0; }
    .row { display: flex; align-items: center; height: 12px; white-space: nowrap; overflow: hidden; }
    .lab { margin-left: 3px; }
    .bold { font-weight: 700; color: #000; }
    .vsb { width: 10px; background: #f0f0f0; display: flex; flex-direction: column; align-items: center; padding: 4px 0 2px; flex: none; }
    .vt { width: 10px; background: #cdcdcd; }
    .tree-thumb { height: 130px; margin: auto 0 3px; }
    .hsb { height: 12px; background: #f0f0f0; display: flex; align-items: center; flex: none; padding: 0 12px 0 3px; justify-content: space-between; }
    .ht { height: 10px; width: 95px; background: #cdcdcd; margin-right: auto; margin-left: 4px; }
    .view { flex: 1; min-width: 0; display: flex; flex-direction: column; border-left: 1px solid #777; background: #fff; margin-right: 4px; }
    .vrow { flex: 1; min-height: 0; display: flex; }
    .canvas { flex: 1; min-width: 0; position: relative; overflow: hidden; }
    .plan { display: block; width: 100%; height: 100%; }
    .big-t { font-family: "Liberation Sans", Arial, sans-serif; font-size: 26px; fill: #000; }
    .dollar { font-family: Roboto, sans-serif; font-weight: 300; font-size: 22px; fill: #555; }
    .mdi { position: absolute; right: 1px; top: 5px; display: flex; }
    .mdi .ib { width: 12px; height: 9px; }
    .nav { position: absolute; right: 1px; top: 19px; width: 23px; height: 97px; border: 1px solid #aaa; border-radius: 3px; background: #f0f0f0cc; display: flex; flex-direction: column; align-items: center; justify-content: space-between; padding: 1px; }
    .nav hr { width: 17px; border: 0; border-top: 1px solid #ccc; margin: 0; }
    .nend { align-self: flex-end; }
    .main-thumb { height: 10px; margin: auto 0; }
    .vbar { height: 12px; flex: none; background: #f0f0f0; display: flex; align-items: center; padding-left: 8px; color: #222; }
    .sc { width: 43px; }
    .vi { width: 14px; height: 12px; }
    .mt { width: 12px; height: 10px; background: #cdcdcd; margin: 0 auto; }
    .status { height: 18px; flex: none; display: flex; align-items: center; border-top: 1px solid #b5b5b5; color: #222; padding-left: 4px; }
    .msg { width: 567px; white-space: nowrap; }
    .white { background: #fff; border: 0; height: 12px; width: 136px; }
    .white select { color: #777; } .white .ic { top: 4px; right: 4px; }
    .s1 { width: 14px; } .s2 { width: 18px; } .s3 { width: 26px; }
    .right { margin-left: auto; display: flex; align-items: center; padding-right: 58px; }
    .paper { height: 14px; flex: none; background: linear-gradient(90deg, #000 77px, #141414 77px, #141414 230px, #141a45 330px, #1a2465 480px, #1a2568 1187px, #707075 1187px, #707075 1203px, #000 1203px); }
    .paper svg { display: block; width: 100%; height: 4px; }
    .task { height: 27px; flex: none; display: flex; background: #020308; color: #fff; }
    .tk { width: 32px; height: 27px; }
    .apps { display: flex; width: 392px; }
    .app { flex: 1; height: 27px; border-bottom: 2px solid transparent; padding-top: 1px; position: relative; }
    .run { border-bottom-color: #6fb0e2; margin: 0 3px; }
    .on { background: #34363c; margin: 0; }
    .badge { position: absolute; right: 2px; bottom: 0; width: 13px; height: 13px; border-radius: 7px; background: #333; border: 1px solid #999; line-height: 11px; text-align: center; }
    .clock { margin-left: auto; padding: 1px 3px 0 0; text-align: center; white-space: nowrap; }
  `;

  private title() {
    return html`<header class="title">
      ${QUICK.map(([n, l, w]) => (n === "|" ? html`<span class="vs"></span>` : btn(n, l, w)))}
      <div class="caption"><span>Autodesk Revit 2018 -</span><span>Rac_advanced_sample_project-Elec - Sheet: E102 - CEILING PLAN AREA B</span></div>
      ${btn("playR", "Expand search", "w8")}
      <input class="search" aria-label="Search help" placeholder="Type a keyword or phrase" />
      ${btn("binoc", "Search", "w16")}${btn("satellite", "Communication center", "w16")}${btn("star", "Favorites", "w16")}${btn("user", "Sign in", "w16")}
      <span class="acct">dmitchellDER...</span>${btn("caret", "Account menu", "w10")}
      <button class="trial" aria-label="28 days left">${ic("clock")}28</button>
      ${btn("cart", "App store", "w17")}<span class="vs"></span>${btn("help", "Help", "w17")}${btn("caret", "Help menu", "w8")}
      <div class="sys">${btn("min", "Minimize", "w17")}${btn("max", "Maximize", "w17")}${btn("close", "Close", "w17")}</div>
    </header>`;
  }

  private ribbon() {
    const many = (names: string[], cls: string) => names.map((n) => btn(n, n, cls));
    const geo = (n: string, t: string) => html`<button class="gt">${ic(n)}${t}${ic("caret")}</button>`;
    return html`<section class="ribbon" aria-label="Ribbon">
      <div class="panel p1"><div class="pb"><button class="modify">${ic("cursor")}Modify</button></div><div class="pl">Select ${ic("caret")}</div></div>
      <div class="panel p2"><div class="pb col">${btn("typeProps", "Type properties", "big")}${btn("props", "Properties", "big sel-on")}</div><div class="pl">Properties</div></div>
      <div class="panel p3"><div class="pb"><button class="pastebtn dim">${ic("paste")}Paste${ic("caret")}</button><div class="col">${many(["cut", "copyDim", "match"], "sm")}</div></div><div class="pl">Clipboard</div></div>
      <div class="panel p4"><div class="pb"><div class="geo">
        ${geo("cope", "Cope")}${many(["jSplit", "beam"], "")}<span></span>
        ${geo("cutGeo", "Cut")}${many(["wallJoin", "unjoin", "caret"], "")}
        ${geo("join", "Join")}${many(["paintL", "hammer"], "")}
      </div></div><div class="pl">Geometry</div></div>
      <div class="panel p5"><div class="pb">
        <div class="g4">${many(["align", "offset", "mirrorAx", "mirrorDr", "move", "copy", "rotate", "trim"], "big")}</div>
        <div class="g3">${many(["split1", "split2", "unpin", "array", "scale", "pin", "trimS", "trimM", "del"], "sm")}</div>
      </div><div class="pl">Modify</div></div>
      <div class="panel p6"><div class="pb"><div class="gv">${many(["bulb", "caret", "clay", "brush", "caret", "lwork", "box3"], "")}</div></div><div class="pl">View</div></div>
      <div class="panel p7"><div class="pb"><div class="col">${many(["measBig", "dimBig"], "big")}</div><div class="col">${many(["caret", "caret"], "arr")}</div></div><div class="pl">Measure</div></div>
      <div class="panel p8"><div class="pb"><div class="col">${many(["grp", "parts"], "big")}</div><div class="col">${many(["asm", "sim"], "big")}</div></div><div class="pl">Create</div></div>
    </section>`;
  }

  private options() {
    return html`<div class="opts">
      <span class="mode">Modify | Place Element Keynote</span>
      <span class="lo">${ic("leaderOpt")}</span>
      <span class="dd d1"><select aria-label="Orientation"><option>Horizontal</option></select>${ic("chev")}</span>
      <label class="chk"><input type="checkbox" checked />Leader</label>
      <span class="dd d2"><select aria-label="Leader end"><option>Free End</option></select>${ic("chev")}</span>
      ${ic("hdim")}<input class="off" aria-label="Leader length" .value=${'1/2"'} />
    </div>`;
  }

  private cell(c: string, narrow: boolean) {
    const w = narrow ? 11 : 13;
    const box = c === "+" || c === "-";
    return html`<svg class="ic" width=${w} height="12" viewBox="0 0 ${w} 12" aria-hidden="true">
      ${c === " " ? "" : svg`<path d=${"M3.5 0V" + (c === "L" ? 6 : 12)} stroke="#bbb" stroke-dasharray="1 1"/>`}
      ${box || c === "L" || c === "T" ? svg`<path d=${"M4 6.5H" + w} stroke="#bbb" stroke-dasharray="1 1"/>` : ""}
      ${box ? svg`<rect x="1" y="4" width="5" height="5" fill="#fff" stroke="#aaa"/><path d=${c === "+" ? "M2 6.5h3M3.5 5v3" : "M2 6.5h3"} stroke="#555"/>` : ""}
    </svg>`;
  }

  private dock() {
    return html`<aside class="dock">
      <div class="hd">Properties<button aria-label="Close properties">${ic("x")}</button></div>
      <div class="props">
        <div class="type"><span class="thumb"></span><div class="tname">Keynote Tag<br />Keynote Number -<br />Boxed - Large</div>${btn("caret", "Change type")}</div>
        <div class="filter"><span class="dd d3"><select aria-label="Category"><option>Keynote Tags</option></select>${ic("chev")}</span><button class="et">${ic("editType")}Edit Type</button></div>
        <div class="blank"></div>
        <div class="foot"><a href="#help">Properties help</a><button class="apply" disabled>Apply</button></div>
      </div>
      <div class="hd">Project Browser - Rac_advanced_sa...<button aria-label="Close browser">${ic("x")}</button></div>
      <div class="browser">
        <div class="tw"><ul class="tree">${TREE.map((r) => html`<li class=${classMap({ row: true, bold: !!r.bold })}>
          ${[...r.g].map((c) => this.cell(c, !!r.icon))}${r.icon ? ic(r.icon) : ""}<span class="lab">${r.t}</span></li>`)}</ul>
          <div class="vsb">${ic("up")}<span class="vt tree-thumb"></span>${ic("down")}</div></div>
        <div class="hsb">${ic("left")}<span class="ht"></span>${ic("right")}</div>
      </div>
    </aside>`;
  }

  private door(x: number, dir: number) {
    return svg`<rect x=${dir < 0 ? x - 5 : x} y="199" width="5" height="74" fill="#fff" stroke="#999" stroke-width="1.500"/>
      <path d=${`M${x + dir * 5} 273C${x + dir * 45} 270 ${x + dir * 74} 236 ${x + dir * 74.5} 199`} fill="none" stroke="#aaa" stroke-width=".8"/>`;
  }

  private plan() {
    return html`<svg class="plan" role="img" aria-label="Ceiling plan area B"><g transform="translate(-153 -117)">
      ${V_LINES.map((x) => svg`<path d=${`M${x} 200V2000`} stroke="#9c9c9c" stroke-width="1.200"/>`)}
      ${H_LINES.map((y) => svg`<path d=${`M153 ${y}H620M632 ${y}H1108M1121 ${y}H3000`} stroke="#aaa" stroke-width="1.200"/>`)}
      <path d="M378 287.500H3000" stroke="#999" stroke-width="1"/>
      ${DASHES.map(([a, b]) => svg`<path d=${`M${a} 219H${b}`} stroke="#999" stroke-width="1.300"/>`)}
      <path d="M535 187.500H608M641 187.500H715M1024 187.500H1098M1131 187.500H1205M535 198.500H608M1131 198.500H1205" stroke="#999"/>
      <g fill="none" stroke="#a3a3a3" stroke-width="3">
        <path d="M153 187.500H533.500V198.500H153"/><path d="M619.500 2000V198.500H608.500V187.500H641V198.500"/>
        <path d="M715.500 198V187.500H1023.500V198"/><path d="M1098.500 198V187.500H1130.500V198.500H1120V2000"/><path d="M3000 187.500H1205.500V198.500H3000"/>
        <path d="M619.500 200V2000M1120 200V2000" stroke-width="4"/>
      </g>
      ${this.door(608.5, -1)}${this.door(640.5, 1)}${this.door(1098, -1)}${this.door(1130, 1)}
      <path d="M630.500 2000V198.500H1108.500V2000" fill="none" stroke="#4a65b0" stroke-width="3"/>
      <circle cx="276.500" cy="219" r="12" fill="none" stroke="#a0a0a0" stroke-width="2"/><circle cx="807" cy="219" r="12" fill="none" stroke="#a0a0a0" stroke-width="2"/>
      <path d="M269 227l4-5 1 5zM271 225h3" fill="none" stroke="#aaa" stroke-width=".8"/>
      ${FIXTURES.map(([x, y]) => svg`<g><rect x=${x} y=${y + 0.5} width="96" height="45.500" fill="none" stroke="#000" stroke-width="2.500"/>
        <path d=${`M${x} ${y + 45}L${x + 96} ${y + 1}`} stroke="#000" stroke-width="2"/><text class="big-t" x=${x + 78.5} y=${y + 37.5} text-anchor="middle">A</text></g>`)}
      ${LABELS.map(([x, y]) => svg`<g><rect x=${x} y=${y} width="187" height="30.500" fill="none" stroke="#333" stroke-width="1"/>
        <rect x=${x + 77} y=${y - 2} width="31" height="28" fill="#fff"/><text class="big-t" x=${x + 92.5} y=${y + 24} text-anchor="middle">L1</text></g>`)}
      <path d="M883.500 251V269L828 293M848 436L802 487M174 436L153 447" fill="none" stroke="#333" stroke-width=".9"/>
      <path d="M883.500 269V308" stroke="#888"/>
      <path d="M448 216.500L378 287H398.500A49.500 49.500 0 0 1 497.500 287H518.500Z" fill="#0638b8"/>
      <circle cx="448.500" cy="286.500" r="49.500" fill="none" stroke="#1b3c9c" stroke-width=".9"/>
      <path d="M445 269.500h7M436 310.500h9M446.500 310.500h7M455 310.500h6" stroke="#1040c0" stroke-width="2.500"/>
      <text class="dollar" x="475" y="218" text-anchor="middle">$</text><text class="dollar" x="512.500" y="218" text-anchor="middle">$</text>
      <g transform="translate(883 308)">${arrowCursor}</g>
    </g></svg>`;
  }

  private view() {
    return html`<main class="view">
      <div class="vrow"><div class="canvas">${this.plan()}
        <div class="mdi">${btn("mdiMin", "Minimize view")}${btn("mdiMax", "Restore view")}${btn("mdiX", "Close view")}</div>
        <div class="nav"><span class="nend">${ic("nDot")}</span>${btn("nWheel", "Steering wheel")}${ic("navCaret")}<hr />${btn("nPan", "Pan")}${btn("nZoom", "Zoom region")}${ic("navCaret")}<span class="nend">${ic("nDot")}</span></div>
      </div><div class="vsb">${ic("up")}<span class="vt main-thumb"></span>${ic("down")}</div></div>
      <div class="vbar"><span class="sc">1/8" = 1'-0"</span>
        ${["vRect", "vCube", "vSun", "vShade", "vCrop", "vCrop2", "vLock", "vBulb", "vHide", "vWork", "vCons", "left"].map((n) => btn(n, n, "vi"))}
        <span class="mt"></span>${ic("right")}<span class="lo">${ic("grip")}</span></div>
    </main>`;
  }

  render() {
    return html`
      <div class="desk">
        <div class="win">
          ${this.title()}
          <nav class="tabs"><button class="file">File</button>${TABS.map((t) => html`<button class="tab">${t}</button>`)}<button class="active">Modify | Place Element Keynote</button>${btn("tabMore", "Ribbon state", "more")}</nav>
          ${this.ribbon()}${this.options()}
          <div class="body">${this.dock()}${this.view()}</div>
          <footer class="status"><span class="msg">RVT Links : Linked Revit Model : rac_advanced_sample_project.rvt : 1 : location &lt;Not Shared&gt;</span>
            <span class="s2">${ic("sWork")}</span><span class="dd white"><select aria-label="Workset"><option></option></select>${ic("chev")}</span>
            <span class="lo">${ic("funnelDim")}</span><span class="s3">:0</span><span class="s1">${ic("sOpt")}</span><span class="s1">${ic("sAdd")}</span>
            <span class="dd white"><select aria-label="Design option"><option>Main Model</option></select>${ic("chev")}</span>
            <div class="right">${["selLink", "selUnder", "selPin", "selFace", "selDrag", "gearDim"].map((n) => btn(n, n, "w17"))}${btn("funnel", "Filter", "w14")}:0</div>
          </footer>
        </div>
        <div class="behind"><div class="b1"></div><div class="b2"><span>⋮</span><span>s</span></div></div>
      </div>
      <div class="paper"><svg aria-hidden="true">${MARKS.map(([x, w]) => svg`<rect x=${x} y="-4" width=${w} height=${w > 15 ? 7 : 6} rx="2" fill="#b5b8c0"/>`)}</svg></div>
      <div class="task">${btn("tWin", "Start", "tk")}${btn("tRing", "Cortana", "tk")}${btn("tTask", "Task view", "tk")}
        <div class="apps">${TASKS.map(([n, l, c]) => html`<button class="app ${c}" aria-label=${l}>${ic(n)}${n === "tMail" ? html`<span class="badge">14</span>` : ""}</button>`)}</div>
        <div class="clock">8:52 PM<br />3/22/2018</div>
      </div>`;
  }
}
